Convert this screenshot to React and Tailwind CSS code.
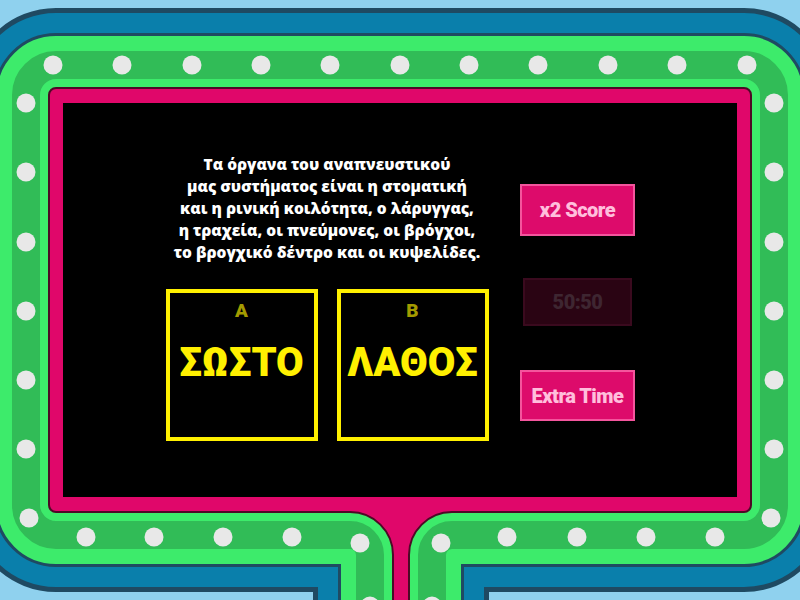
const L = 26;
const T = 65;
const R = 774;
const B = 535;
const SL = 370;
const SR = 432;
const r = 30;
const r2 = 20;

const framePath = `M ${SL} 640 V ${B + r2} A ${r2} ${r2} 0 0 0 ${SL - r2} ${B} H ${L + r} A ${r} ${r} 0 0 1 ${L} ${B - r} V ${T + r} A ${r} ${r} 0 0 1 ${L + r} ${T} H ${R - r} A ${r} ${r} 0 0 1 ${R} ${T + r} V ${B - r} A ${r} ${r} 0 0 1 ${R - r} ${B} H ${SR + r2} A ${r2} ${r2} 0 0 0 ${SR} ${B + r2} V 640`;

const screenPath =
  "M 56 88 H 744 A 7 7 0 0 1 751 95 V 505 A 7 7 0 0 1 744 512 H 452 A 43 43 0 0 0 409 555 V 640 H 393 V 555 A 43 43 0 0 0 350 512 H 56 A 7 7 0 0 1 49 505 V 95 A 7 7 0 0 1 56 88 Z";

const dots = [
  [53, 65], [122, 65], [192, 65], [261, 65], [330, 65], [400, 65], [469, 65], [538, 65], [608, 65], [677, 65], [747, 65],
  [26, 103], [26, 172], [26, 242], [26, 311], [26, 380], [26, 449], [29, 518],
  [774, 103], [774, 172], [774, 242], [774, 311], [774, 380], [774, 449], [771, 518],
  [86, 537], [154, 537], [223, 537], [292, 537], [360, 543],
  [441, 543], [507, 537], [577, 537], [646, 537], [715, 537],
  [370, 606], [432, 606],
];

const question = [
  "Τα όργανα του αναπνευστικού",
  "μας συστήματος είναι η στοματική",
  "και η ρινική κοιλότητα, ο λάρυγγας,",
  "η τραχεία, οι πνεύμονες, οι βρόγχοι,",
  "το βρογχικό δέντρο και οι κυψελίδες.",
];

const answers = [
  { id: "a", letter: "A", text: "ΣΩΣΤΟ" },
  { id: "b", letter: "B", text: "ΛΑΘΟΣ" },
];

function StageFrame() {
  return (
    <svg className="absolute inset-0" width="800" height="600" viewBox="0 0 800 600">
      <path d={framePath} fill="none" stroke="#1f4a62" strokeWidth="114" />
      <path d={framePath} fill="none" stroke="#0a7fab" strokeWidth="104" />
      <path d={framePath} fill="none" stroke="#1f4a62" strokeWidth="64" />
      <path d={framePath} fill="none" stroke="#3deb6b" strokeWidth="58" />
      <path d={framePath} fill="none" stroke="#31bc57" strokeWidth="28" />
      {dots.map(([cx, cy]) => (
        <circle key={`${cx}-${cy}`} cx={cx} cy={cy} r="9.5" fill="#e8e8e8" />
      ))}
      <path d={screenPath} fill="#e0076a" stroke="#4d0a26" strokeWidth="2" />
    </svg>
  );
}

function AnswerBox({ letter, text }) {
  return (
    <div className="w-[152px] h-[152px] border-4 border-[#fff000] flex flex-col items-center">
      <span className="mt-[6px] text-[19px] leading-[24px] font-black text-[#a39b00]">
        {letter}
      </span>
      <span className="mt-[16px] text-[40px] leading-[48px] font-black text-[#fff000]">
        {text}
      </span>
    </div>
  );
}

function PowerButton({ label, disabled, className }) {
  return (
    <div
      className={
        disabled
          ? `flex items-center justify-center border-2 border-[#3a0a1e] bg-[#2a0413] text-[#3e2631] ${className}`
          : `flex items-center justify-center border-2 border-[#f4559d] bg-[#dd0b6b] text-[#ffbedc] ${className}`
      }
    >
      <span className="text-[20px] font-black tracking-tight">{label}</span>
    </div>
  );
}

export default function App() {
  return (
    <div
      className="relative w-[800px] h-[600px] overflow-hidden bg-[#8fd1ee]"
      style={{ fontFamily: '"Roboto", "Liberation Sans", sans-serif' }}
    >
      <StageFrame />
      <div className="relative pt-[103px] pl-[63px]">
        <div className="w-[674px] h-[394px] bg-black flex">
          <div className="ml-[97px] w-[334px] pt-[50px] flex flex-col items-center">
            <p
              className="text-white text-[15.5px] leading-[22px] font-extrabold text-center"
              style={{ fontFamily: '"Open Sans", sans-serif' }}
            >
              {question.map((line) => (
                <span key={line} className="block whitespace-nowrap">
                  {line}
                </span>
              ))}
            </p>
            <div className="mt-[26px] flex gap-[19px]">
              {answers.map((a) => (
                <AnswerBox key={a.id} {...a} />
              ))}
            </div>
          </div>
          <div className="ml-[26px] w-[115px] pt-[81px] flex flex-col items-center">
            <PowerButton label="x2 Score" className="w-[115px] h-[52px]" />
            <PowerButton label="50:50" disabled className="mt-[42px] w-[109px] h-[48px]" />
            <PowerButton label="Extra Time" className="mt-[44px] w-[115px] h-[51px]" />
          </div>
        </div>
      </div>
    </div>
  );
}
